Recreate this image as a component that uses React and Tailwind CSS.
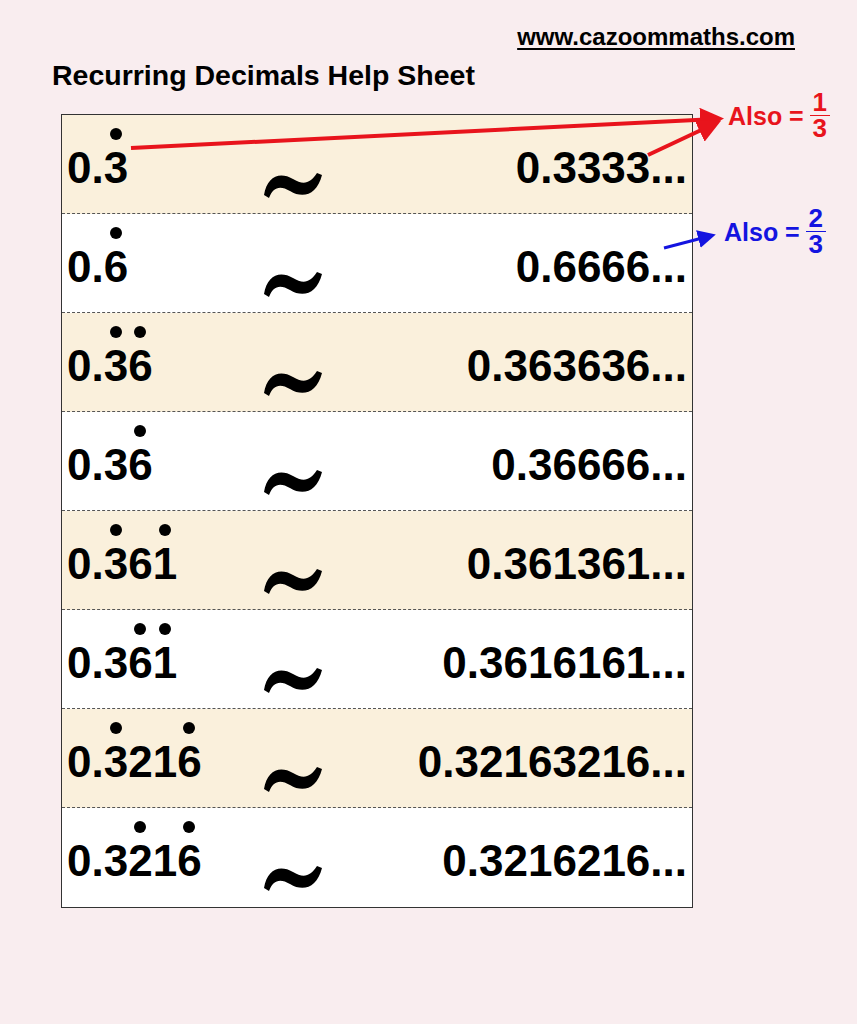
const rows = [
  { l: [["0.", 0], ["3", 1]], r: "0.3333...", bg: "bg-[#faf0dc]" },
  { l: [["0.", 0], ["6", 1]], r: "0.6666...", bg: "bg-white" },
  { l: [["0.", 0], ["3", 1], ["6", 1]], r: "0.363636...", bg: "bg-[#faf0dc]" },
  { l: [["0.3", 0], ["6", 1]], r: "0.36666...", bg: "bg-white" },
  { l: [["0.", 0], ["3", 1], ["6", 0], ["1", 1]], r: "0.361361...", bg: "bg-[#faf0dc]" },
  { l: [["0.3", 0], ["6", 1], ["1", 1]], r: "0.3616161...", bg: "bg-white" },
  { l: [["0.", 0], ["3", 1], ["21", 0], ["6", 1]], r: "0.32163216...", bg: "bg-[#faf0dc]" },
  { l: [["0.3", 0], ["2", 1], ["1", 0], ["6", 1]], r: "0.3216216...", bg: "bg-white" },
];

function Tilde() {
  return (
    <svg width="60" height="32" viewBox="0 0 60 32">
      <path d="M1 26 C4 8, 16 2, 30 10 C40 16, 47 15, 54 4 L59 6 C54 26, 40 30, 27 22 C17 16, 10 18, 6 29 Z" fill="#000" />
    </svg>
  );
}

export default function App() {
  return (
    <div className="relative w-[857px] h-[1024px] bg-[#f9edef] font-[Liberation_Sans,Arial,sans-serif] text-black overflow-hidden">
      <div className="flex justify-end pr-[62px] pt-[22px]">
        <span className="text-[24px] font-bold underline underline-offset-[3px] leading-[30px]">www.cazoommaths.com</span>
      </div>
      <div className="pl-[52px] pt-[6px] text-[28.5px] font-bold leading-[34px]">Recurring Decimals Help Sheet</div>
      <div className="ml-[61px] mt-[22px] w-[632px] border border-[#333] relative">
        <div className="absolute left-[223px] top-0 bottom-0 border-l border-dotted border-[#ccc]" />
        {rows.map((row, i) => (
          <div key={i} className={`relative h-[99px] ${row.bg} ${i < 7 ? "border-b border-dashed border-[#555]" : ""} flex items-start px-[5px]`}>
            <div className="pt-[28px] text-[44px] font-bold leading-[50px] w-[190px] flex">
              {row.l.map(([t, d], j) => (
                <span key={j} className="relative inline-block">
                  {t}
                  {d ? <span className="absolute left-1/2 -translate-x-1/2 top-[-15px] w-[12px] h-[12px] rounded-full bg-black" /> : null}
                </span>
              ))}
            </div>
            <div className="pt-[54px] ml-[6px]"><Tilde /></div>
            <div className="flex-1 text-right pt-[28px] text-[44px] font-bold leading-[50px]">{row.r}</div>
          </div>
        ))}
      </div>
      <div className="absolute left-[728px] top-[90px] flex items-center text-[#e8141c] font-bold">
        <span className="text-[25px] leading-[30px]">Also =</span>
        <span className="ml-[6px] flex flex-col items-center text-[26px] leading-[25px]">
          <span>1</span><span className="w-[20px] border-t border-[#e8141c]" /><span>3</span>
        </span>
      </div>
      <div className="absolute left-[724px] top-[206px] flex items-center text-[#1414e0] font-bold">
        <span className="text-[25px] leading-[30px]">Also =</span>
        <span className="ml-[6px] flex flex-col items-center text-[26px] leading-[25px]">
          <span>2</span><span className="w-[20px] border-t border-[#1414e0]" /><span>3</span>
        </span>
      </div>
      <svg className="absolute left-0 top-0" width="857" height="1024">
        <defs>
          <marker id="ar" markerWidth="6" markerHeight="6" refX="4" refY="3" orient="auto"><path d="M0 0 L6 3 L0 6 Z" fill="#e8141c" /></marker>
          <marker id="ab" markerWidth="6" markerHeight="6" refX="4" refY="3" orient="auto"><path d="M0 0 L6 3 L0 6 Z" fill="#1414e0" /></marker>
        </defs>
        <line x1="131" y1="148" x2="716" y2="119" stroke="#e8141c" strokeWidth="4" markerEnd="url(#ar)" />
        <line x1="648" y1="155" x2="714" y2="124" stroke="#e8141c" strokeWidth="4" markerEnd="url(#ar)" />
        <line x1="664" y1="248" x2="710" y2="236" stroke="#1414e0" strokeWidth="3" markerEnd="url(#ab)" />
      </svg>
    </div>
  );
}
